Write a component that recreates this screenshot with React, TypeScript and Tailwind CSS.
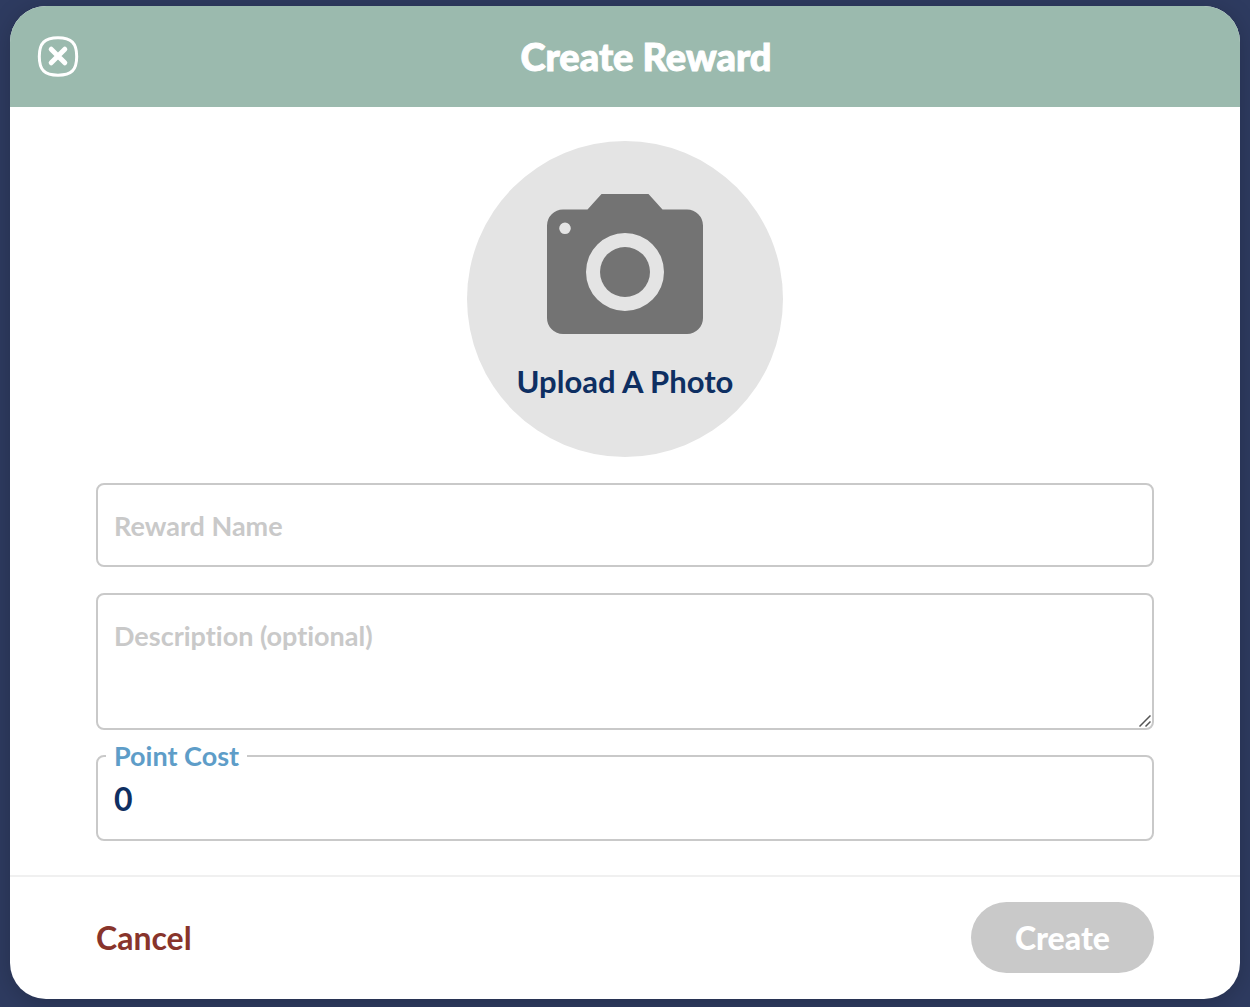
function CloseIcon() {
  return (
    <svg viewBox="0 0 42 42" className="size-[42px]" fill="none" stroke="currentColor" aria-hidden="true">
      <path
        d="M21 1.8C34.5 1.8 39.7 7 39.7 20.5S34.5 39.2 21 39.2 2.3 34 2.3 20.5 7.5 1.8 21 1.8Z"
        strokeWidth="3"
      />
      <path d="M14.2 13.2 27.8 26.8M27.8 13.2 14.2 26.8" strokeWidth="5" strokeLinecap="round" />
    </svg>
  );
}

function CameraIcon() {
  return (
    <svg viewBox="0 0 156 140" className="h-[140px] w-[156px] text-[#737373]" aria-hidden="true">
      <path
        fill="currentColor"
        fillRule="evenodd"
        d="M54.5 0H101.5L115.5 15.5H140A16 16 0 0 1 156 31.5V124A16 16 0 0 1 140 140H16A16 16 0 0 1 0 124V31.5A16 16 0 0 1 16 15.5H40.5ZM18 28.5A5.8 5.8 0 1 0 18 40.1 5.8 5.8 0 1 0 18 28.5ZM78 39A39 39 0 1 0 78 117 39 39 0 1 0 78 39Z"
      />
      <circle cx="78" cy="78" r="25" fill="currentColor" />
    </svg>
  );
}

export default function App() {
  return (
    <div className="min-h-screen bg-[#2e3b60] px-2.5 pt-1.5 pb-2 font-['Lato',sans-serif] font-bold text-[#0e2f62] [font-variant-ligatures:none]">
      <form
        role="dialog"
        aria-labelledby="dialog-title"
        className="overflow-hidden rounded-[36px] bg-white shadow-[0_4px_24px_rgba(0,0,0,0.2)]"
      >
        <header className="grid grid-cols-[42px_1fr] items-center bg-[#9bbaae] px-[27px] py-[29px] text-white">
          <button type="button" aria-label="Close">
            <CloseIcon />
          </button>
          <h1
            id="dialog-title"
            className="text-center text-[38px] leading-[43px] font-black [-webkit-text-stroke:1px_white]"
          >
            Create Reward
          </h1>
        </header>

        <div className="flex flex-col gap-[26px] px-[86px] py-[34px]">
          <button
            type="button"
            className="flex size-[316px] flex-col items-center self-center rounded-full bg-[#e4e4e4] pt-[53px]"
          >
            <CameraIcon />
            <span className="mt-7 text-[31px] leading-[38px]">Upload A Photo</span>
          </button>

          <input
            type="text"
            aria-label="Reward Name"
            placeholder="Reward Name"
            className="h-[84px] w-full rounded-lg border-2 border-[#c9c9c9] px-4 text-[27px] placeholder:text-[#c9c9c9]"
          />

          <div className="relative flex">
            <textarea
              aria-label="Description (optional)"
              placeholder="Description (optional)"
              className="h-[137px] w-full resize-none rounded-lg border-2 border-[#c9c9c9] px-4 py-[23px] text-[27px] leading-[36px] placeholder:text-[#c9c9c9]"
            />
            <svg
              viewBox="0 0 12 12"
              className="pointer-events-none absolute right-[3px] bottom-[3px] size-3 text-[#555555]"
              stroke="currentColor"
              strokeWidth="1.5"
              aria-hidden="true"
            >
              <path d="M0.5 11.5 11.5 0.5M6.5 11.5 11.5 6.5" />
            </svg>
          </div>

          <fieldset className="-mt-[18px] rounded-lg border-2 border-[#c9c9c9] px-2">
            <legend className="px-2 text-[27px] leading-[36px] text-[#5e9dc8]">
              <label htmlFor="point-cost">Point Cost</label>
            </legend>
            <input
              id="point-cost"
              type="text"
              inputMode="numeric"
              defaultValue="0"
              className="mb-4 block h-[49px] w-full px-2 text-[32px]"
            />
          </fieldset>
        </div>

        <footer className="flex items-center justify-between border-t-2 border-[#f0f0f0] px-[86px] pt-[25px] pb-[26px]">
          <button type="button" className="text-[32px] leading-[40px] text-[#88342b]">
            Cancel
          </button>
          <button
            type="submit"
            disabled
            className="h-[71px] rounded-full bg-[#c9c9c9] px-11 text-[32px] font-black text-white"
          >
            Create
          </button>
        </footer>
      </form>
    </div>
  );
}
